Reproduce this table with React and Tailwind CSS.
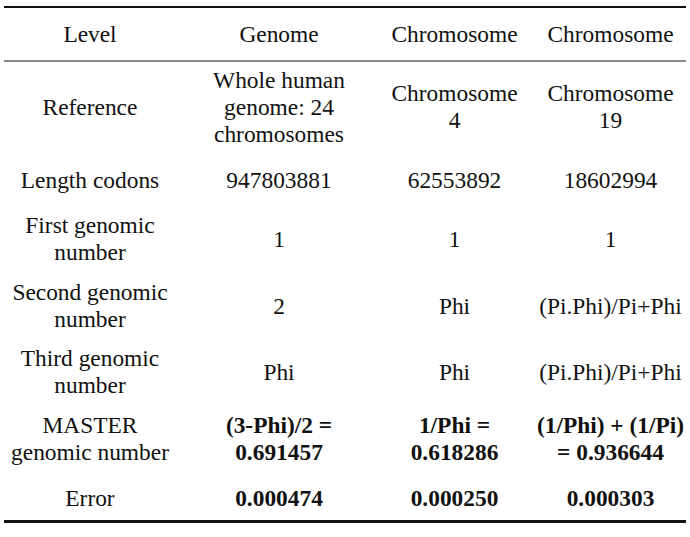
const rows = [
  { h: 'h-[90px]', cells: [['Reference'], ['Whole human', 'genome: 24', 'chromosomes'], ['Chromosome', '4'], ['Chromosome', '19']] },
  { h: 'h-[56px]', cells: [['Length codons'], ['947803881'], ['62553892'], ['18602994']] },
  { h: 'h-[62px]', cells: [['First genomic', 'number'], ['1'], ['1'], ['1']] },
  { h: 'h-[72px]', cells: [['Second genomic', 'number'], ['2'], ['Phi'], ['(Pi.Phi)/Pi+Phi']] },
  { h: 'h-[60px]', cells: [['Third genomic', 'number'], ['Phi'], ['Phi'], ['(Pi.Phi)/Pi+Phi']] },
  { h: 'h-[74px]', bold: true, cells: [['MASTER', 'genomic number'], ['(3-Phi)/2 =', '0.691457'], ['1/Phi =', '0.618286'], ['(1/Phi) + (1/Pi)', '= 0.936644']] },
  { h: 'h-[44px]', bold: true, cells: [['Error'], ['0.000474'], ['0.000250'], ['0.000303']] },
]

const cols = 'grid grid-cols-[172px_206px_145px_159px]'

function Cell({ lines, bold, last }) {
  return (
    <div className={`flex flex-col items-center justify-center text-center ${bold ? 'font-bold' : ''} ${last ? 'pl-[8px]' : ''}`}>
      {lines.map((l, i) => (
        <span key={i} className="whitespace-nowrap">{l}</span>
      ))}
    </div>
  )
}

export default function App() {
  return (
    <div className="w-[690px] h-[537px] bg-white pt-[6px] px-[4px] font-[family-name:'Liberation_Serif',serif] text-[23.4px] leading-[27px] text-[#111]">
      <div className="border-t-2 border-[#111]">
        <div className={`${cols} h-[54px] border-b-2 border-[#8a8a8a]`}>
          {['Level', 'Genome', 'Chromosome', 'Chromosome'].map((t, i) => (
            <Cell key={i} lines={[t]} last={i === 3} />
          ))}
        </div>
        {rows.map((r, ri) => (
          <div key={ri} className={`${cols} ${r.h}`}>
            {r.cells.map((c, ci) => (
              <Cell key={ci} lines={c} bold={r.bold && ci > 0} last={ci === 3} />
            ))}
          </div>
        ))}
        <div className="border-t-[3px] border-[#111]" />
      </div>
    </div>
  )
}
